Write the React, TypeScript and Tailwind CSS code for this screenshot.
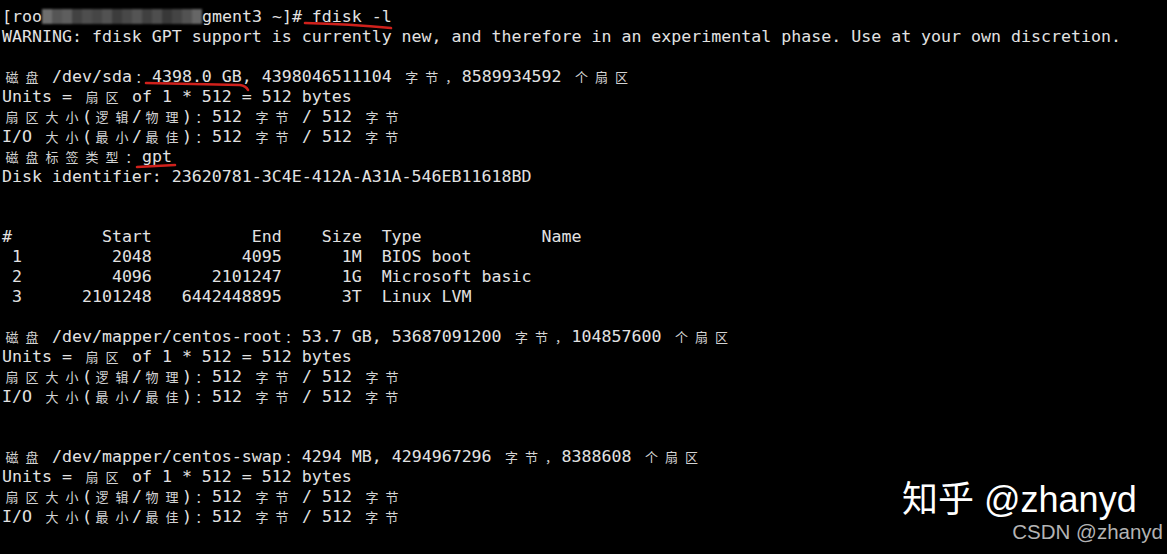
import React from "react";

const isWide = (ch: string) => ch.charCodeAt(0) >= 0x2e80;

function TermLine({ text }: { text: string }) {
  const parts: React.ReactNode[] = [];
  let buf = "";
  Array.from(text).forEach((ch, i) => {
    if (isWide(ch)) {
      if (buf) {
        parts.push(<span key={`t${i}`}>{buf}</span>);
        buf = "";
      }
      parts.push(
        <span
          key={`w${i}`}
          className="inline-block w-[20px] text-center align-top text-[13px] text-[#d4d4d4] font-['Noto_Sans_CJK_SC',sans-serif]"
        >
          {ch}
        </span>
      );
    } else {
      buf += ch;
    }
  });
  if (buf) parts.push(<span key="end">{buf}</span>);
  return <div className="h-5 whitespace-pre">{parts}</div>;
}

const diskBlock = (name: string, size: string, bytes: string, sectors: string) => [
  `磁盘 ${name}：${size}, ${bytes} 字节，${sectors} 个扇区`,
  "Units = 扇区 of 1 * 512 = 512 bytes",
  "扇区大小(逻辑/物理)：512 字节 / 512 字节",
  "I/O 大小(最小/最佳)：512 字节 / 512 字节",
];

const lines = [
  "WARNING: fdisk GPT support is currently new, and therefore in an experimental phase. Use at your own discretion.",
  "",
  ...diskBlock("/dev/sda", "4398.0 GB", "4398046511104", "8589934592"),
  "磁盘标签类型：gpt",
  "Disk identifier: 23620781-3C4E-412A-A31A-546EB11618BD",
  "",
  "",
  "#         Start          End    Size  Type            Name",
  " 1         2048         4095      1M  BIOS boot",
  " 2         4096      2101247      1G  Microsoft basic",
  " 3      2101248   6442448895      3T  Linux LVM",
  "",
  ...diskBlock("/dev/mapper/centos-root", "53.7 GB", "53687091200", "104857600"),
  "",
  "",
  ...diskBlock("/dev/mapper/centos-swap", "4294 MB", "4294967296", "8388608"),
];

// greys of the mosaic that hides the host name
const mosaic = ["#6e6e6e", "#555555", "#5e5e5e", "#424242", "#4e4e4e", "#464646", "#525252", "#3c3c3c", "#484848", "#545454", "#404040", "#4e4e4e", "#383838", "#444444", "#525252", "#666666"];

export default function App() {
  return (
    <div className="relative h-[554px] w-full overflow-hidden bg-black pl-[2px] pt-[7px] text-[16.6px] leading-5 text-[#e2e2e2] font-['DejaVu_Sans_Mono',monospace]">
      <div className="h-5 whitespace-pre">
        <span>[roo</span>
        <span className="inline-flex h-[15px] w-[160px] translate-y-[2px] blur-[1px]">
          {mosaic.map((c, i) => (
            <span key={i} className="h-full flex-1" style={{ background: c }} />
          ))}
        </span>
        <span>gment3 ~]# fdisk -l</span>
      </div>
      {lines.map((l, i) => (
        <TermLine key={i} text={l} />
      ))}

      {/* red marker strokes */}
      <svg className="absolute left-0 top-0 pointer-events-none" width="1167" height="554">
        <g stroke="#d0211c" strokeWidth="2.6" fill="none" strokeLinecap="round">
          <path d="M305 23 Q350 24 391 28" />
          <path d="M146 83 Q200 84 240 85 Q246 86 248 90" />
          <path d="M137 167 Q156 166 175 165" />
        </g>
      </svg>

      {/* watermarks */}
      <div className="absolute left-[902px] top-[476px] whitespace-nowrap text-[36px] leading-[40px] text-white font-['Liberation_Sans','Noto_Sans_CJK_SC',sans-serif]">
        <span className="font-['Noto_Sans_CJK_SC',sans-serif]">知乎</span> @zhanyd
      </div>
      <div className="absolute right-[4px] top-[520px] whitespace-nowrap text-[20.5px] leading-[24px] text-[#b4b4b4] font-['Liberation_Sans',sans-serif]">
        CSDN @zhanyd
      </div>
    </div>
  );
}
